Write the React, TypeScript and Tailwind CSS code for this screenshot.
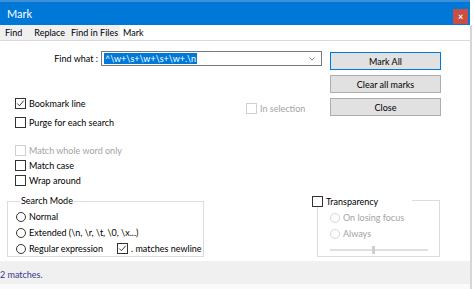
import React from 'react';

const Check = () => (
  <svg viewBox="0 0 11 11" className="w-[9px] h-[9px]">
    <polyline points="1.5,5.5 4.2,8.2 9.5,2" fill="none" stroke="#222" strokeWidth="1.1" />
  </svg>
);

const CheckBox: React.FC<{ label: string; checked?: boolean; disabled?: boolean; className?: string }> = ({ label, checked, disabled, className }) => (
  <div className={`flex items-center h-[11px] ${className ?? ''}`}>
    <div className={`w-[11px] h-[11px] border flex items-center justify-center bg-white ${disabled ? 'border-[#d0d0d0]' : 'border-[#333]'}`}>
      {checked && <Check />}
    </div>
    <span className={`ml-[3px] whitespace-nowrap ${disabled ? 'text-[#a3a3a3]' : 'text-black'}`}>{label}</span>
  </div>
);

const Radio: React.FC<{ label: string; checked?: boolean; disabled?: boolean; className?: string }> = ({ label, checked, disabled, className }) => (
  <div className={`flex items-center h-[11px] ${className ?? ''}`}>
    <div className={`w-[10px] h-[10px] rounded-full border flex items-center justify-center ${disabled ? 'border-[#d6d6d6]' : 'border-[#333]'}`}>
      {checked && <div className="w-[5px] h-[5px] rounded-full bg-[#222]" />}
    </div>
    <span className={`ml-[3px] whitespace-nowrap ${disabled ? 'text-[#a3a3a3]' : 'text-black'}`}>{label}</span>
  </div>
);

const Button: React.FC<{ label: string; primary?: boolean }> = ({ label, primary }) => (
  <div className={`h-[18px] flex items-center justify-center bg-[#e1e1e1] border ${primary ? 'border-[#0078d7]' : 'border-[#adadad]'}`}>
    {label}
  </div>
);

export default function App() {
  return (
    <div className="w-[474px] h-[289px] bg-white flex font-['Lato',sans-serif] text-[9px] text-black leading-none overflow-hidden">
      <div className="w-[470px] flex flex-col">
        {/* title bar */}
        <div className="h-[25px] bg-[#0078d7] border-t-2 border-[#3d8fd8] flex items-center px-[7px]">
          <span className="text-white text-[11px]">Mark</span>
          <div className="ml-auto w-[15px] h-[15px] bg-[#c94f45] flex items-center justify-center text-white text-[9px] font-bold mt-[6px] -mr-[5px]">×</div>
        </div>

        {/* tabs */}
        <div className="h-[16px] flex items-stretch border-b border-[#dadada]">
          <div className="flex items-center bg-[#f0f0f0] w-[120px]">
            <span className="ml-[5px]">Find</span>
            <span className="ml-[12px]">Replace</span>
            <span className="ml-[6px]">Find in Files</span>
          </div>
          <div className="w-[30px] bg-white flex items-center pl-[3px]">Mark</div>
          <div className="flex-1 bg-white" />
        </div>

        {/* body */}
        <div className="pt-[10px] flex flex-col">
          <div className="flex items-start">
            <div className="w-[322px] flex flex-col">
              <div className="flex items-center h-[15px]">
                <span className="w-[101px] text-right pr-[3px]">Find what :</span>
                <div className="flex-1 h-[15px] border border-[#7a7a7a] flex items-center pl-[2px]">
                  <span className="bg-[#0078d7] text-white px-[1px] h-[11px] flex items-center">^\w+\s+\w+\s+\w+.\n</span>
                  <svg viewBox="0 0 8 5" className="w-[6px] h-[4px] ml-auto mr-[6px]">
                    <polyline points="0.5,0.5 4,4 7.5,0.5" fill="none" stroke="#555" strokeWidth="1" />
                  </svg>
                </div>
              </div>
              <div className="flex items-start">
                <div className="w-[246px] pl-[15px] pt-[32px] flex flex-col">
                  <CheckBox label="Bookmark line" checked />
                  <CheckBox label="Purge for each search" className="mt-[8px]" />
                  <CheckBox label="Match whole word only" disabled className="mt-[17px]" />
                  <CheckBox label="Match case" className="mt-[4px]" />
                  <CheckBox label="Wrap around" className="mt-[4px]" />
                </div>
                <div className="pt-[37px]">
                  <CheckBox label="In selection" disabled />
                </div>
              </div>
            </div>
            <div className="ml-[8px] w-[111px] mt-[1px] flex flex-col gap-[5px]">
              <Button label="Mark All" primary />
              <Button label="Clear all marks" />
              <Button label="Close" />
            </div>
          </div>

          {/* group boxes */}
          <div className="flex items-start mt-[9px]">
            <fieldset className="ml-[7px] w-[197px] h-[62px] border border-[#dcdcdc] pl-[8px] flex flex-col gap-[5px] pt-[4px]">
              <legend className="ml-[4px] px-[1px] leading-[12px]">Search Mode</legend>
              <Radio label="Normal" />
              <Radio label="Extended (\n, \r, \t, \0, \x...)" />
              <div className="flex items-center">
                <Radio label="Regular expression" className="w-[101px]" />
                <CheckBox label=". matches newline" checked />
              </div>
            </fieldset>

            <div className="ml-[113px] mt-[5px] w-[123px] h-[57px] border border-[#dcdcdc] relative flex flex-col pl-[12px] pt-[11px]">
              <div className="absolute -left-[6px] -top-[5px] w-[100px] bg-white">
                <CheckBox label="Transparency" />
              </div>
              <Radio label="On losing focus" disabled />
              <Radio label="Always" disabled className="mt-[5px]" />
              <div className="relative mt-[7px] w-[98px] h-[8px] flex items-center">
                <div className="w-full h-[2px] bg-[#e0e0e0]" />
                <div className="absolute left-[42px] top-0 w-[3px] h-[8px] bg-[#cfcfcf]" />
              </div>
            </div>
          </div>
        </div>

        {/* status bar */}
        <div className="mt-[4px] h-[23px] bg-[#f0f0f0] flex items-center pt-[4px]">
          <span className="text-[#35358f]">2 matches.</span>
        </div>
        <div className="flex-1 bg-[#fafafa]" />
      </div>
      <div className="w-[2px] mt-[25px] bg-[#d6d6d6]" />
    </div>
  );
}
